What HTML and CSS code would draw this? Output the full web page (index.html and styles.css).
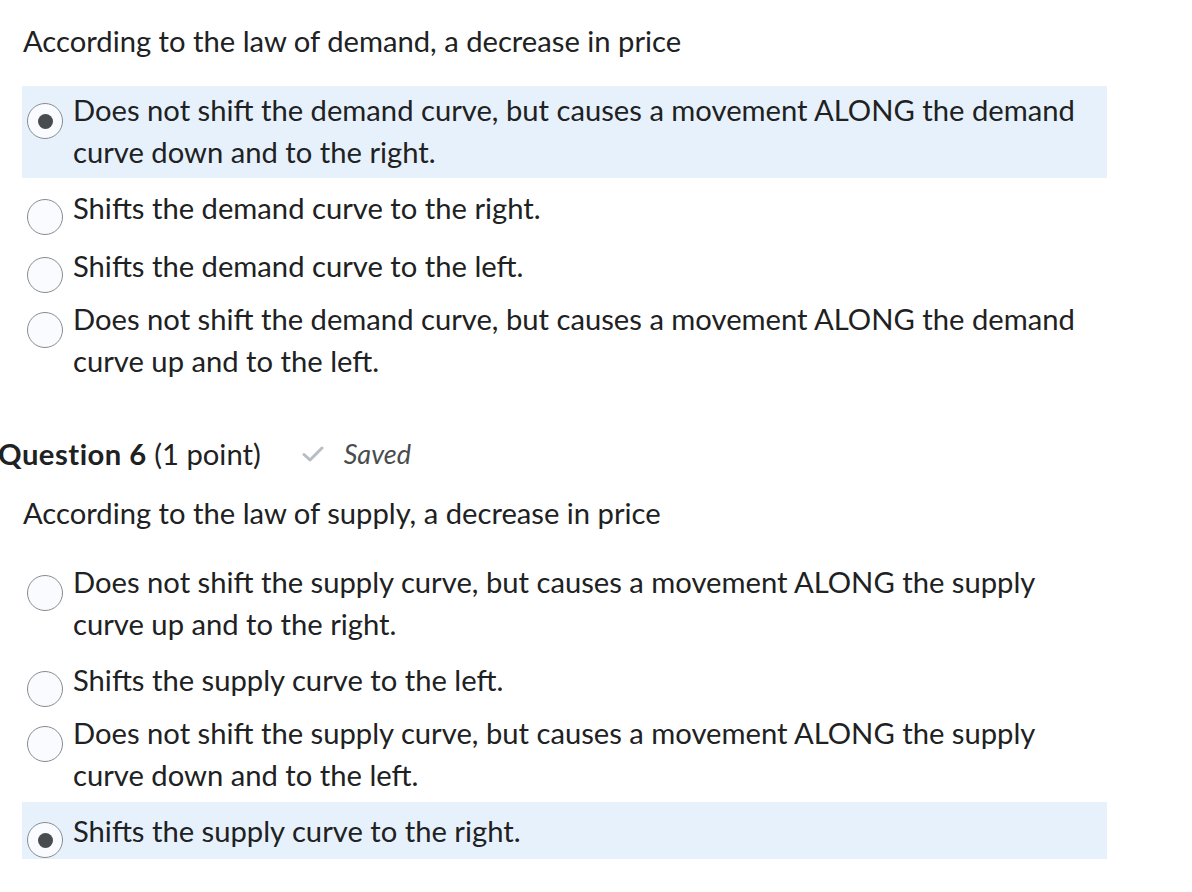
FILE: index.html
```html
<!DOCTYPE html>
<html lang="en">
<head>
<meta charset="utf-8">
<title>Quiz</title>
<link rel="stylesheet" href="styles.css">
</head>
<body>
<div class="page">
  <section class="question">
    <p class="prompt">According to the law of demand, a decrease in price</p>
    <ul class="options">
      <li class="option selected multi">
        <span class="radio"><span class="dot"></span></span>
        <span class="label">Does not shift the demand curve, but causes a movement ALONG the demand curve down and to the right.</span>
      </li>
      <li class="option">
        <span class="radio"></span>
        <span class="label">Shifts the demand curve to the right.</span>
      </li>
      <li class="option">
        <span class="radio"></span>
        <span class="label">Shifts the demand curve to the left.</span>
      </li>
      <li class="option multi">
        <span class="radio"></span>
        <span class="label">Does not shift the demand curve, but causes a movement ALONG the demand curve up and to the left.</span>
      </li>
    </ul>
  </section>

  <section class="question">
    <h2 class="qhead">
      <span class="qtitle"><strong>Question 6</strong> (1 point)</span>
      <span class="saved">
        <svg class="check" width="22" height="16" viewBox="0 0 22 16" aria-hidden="true"><path d="M2 8.5 L8 14 L20 2" fill="none" stroke="#b7bdc2" stroke-width="3" stroke-linecap="round" stroke-linejoin="round"/></svg>
        <em>Saved</em>
      </span>
    </h2>
    <p class="prompt">According to the law of supply, a decrease in price</p>
    <ul class="options">
      <li class="option multi">
        <span class="radio"></span>
        <span class="label">Does not shift the supply curve, but causes a movement ALONG the supply curve up and to the right.</span>
      </li>
      <li class="option">
        <span class="radio"></span>
        <span class="label">Shifts the supply curve to the left.</span>
      </li>
      <li class="option multi">
        <span class="radio"></span>
        <span class="label">Does not shift the supply curve, but causes a movement ALONG the supply curve down and to the left.</span>
      </li>
      <li class="option selected">
        <span class="radio"><span class="dot"></span></span>
        <span class="label">Shifts the supply curve to the right.</span>
      </li>
    </ul>
  </section>
</div>
</body>
</html>
```

FILE: styles.css
```css
html, body {
  margin: 0;
  padding: 0;
  background: #ffffff;
}

body {
  font-family: Lato, "Noto Sans", sans-serif;
  font-size: 29.2px;
  line-height: 42px;
  color: #202122;
}

.page {
  width: 1192px;
  padding-top: 20px;
}

.question {
  margin: 0;
}

.prompt {
  margin: 0 0 24px 23px;
}

.options {
  list-style: none;
  margin: 0 0 0 22px;
  padding: 0;
  width: 1085px;
  display: flex;
  flex-direction: column;
  gap: 1px;
}

.option {
  display: flex;
  align-items: flex-start;
  padding: 8px 10px 7px 5px;
}

.option.multi {
  padding: 3px 10px 5px 5px;
}

.option.selected {
  background: #e7f1fc;
}

.radio {
  flex: none;
  box-sizing: border-box;
  width: 36px;
  height: 36px;
  margin: 12px 10px -6px 0;
  border: 1px solid #868c8f;
  border-radius: 50%;
  background: #f9fbff;
  display: flex;
  align-items: center;
  justify-content: center;
}

.option.multi .radio {
  margin-top: 14px;
  margin-bottom: 0;
}

.dot {
  width: 15px;
  height: 15px;
  border-radius: 50%;
  background: #494c4e;
}

.label {
  flex: 1;
}

.qhead {
  margin: 46px 0 17px -2px;
  font-size: 29.2px;
  line-height: 42px;
  font-weight: 400;
  display: flex;
  align-items: center;
}

.qhead strong {
  font-weight: 700;
  letter-spacing: 0.5px;
}

.saved {
  display: inline-flex;
  align-items: center;
  margin-left: 41px;
  color: #494c4e;
  font-size: 27px;
}

.check {
  margin-right: 20px;
}

.saved em {
  font-style: italic;
}
```
